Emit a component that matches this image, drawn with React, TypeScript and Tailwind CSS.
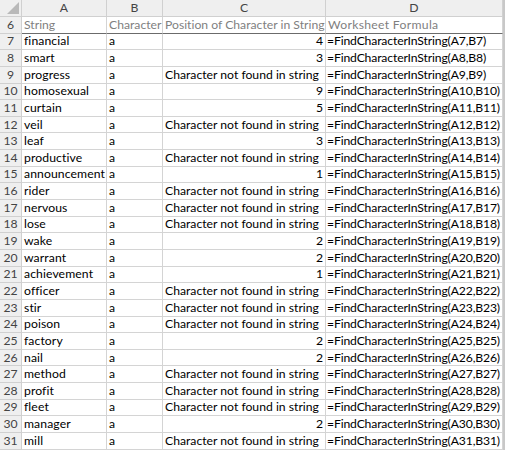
import React from "react";

type Row = [number, string, string];
const NF = "Character not found in string";
const rows: Row[] = [
  [7, "financial", "4"],
  [8, "smart", "3"],
  [9, "progress", NF],
  [10, "homosexual", "9"],
  [11, "curtain", "5"],
  [12, "veil", NF],
  [13, "leaf", "3"],
  [14, "productive", NF],
  [15, "announcement", "1"],
  [16, "rider", NF],
  [17, "nervous", NF],
  [18, "lose", NF],
  [19, "wake", "2"],
  [20, "warrant", "2"],
  [21, "achievement", "1"],
  [22, "officer", NF],
  [23, "stir", NF],
  [24, "poison", NF],
  [25, "factory", "2"],
  [26, "nail", "2"],
  [27, "method", NF],
  [28, "profit", NF],
  [29, "fleet", NF],
  [30, "manager", "2"],
  [31, "mill", NF],
];

const cols = "grid grid-cols-[22px_85px_56px_163px_177px_2px]";
const cell = "border-r border-b border-[#d4d4d4] px-[2px] flex items-center whitespace-nowrap";
const hdr = "bg-[#efefef] border-r border-b border-[#d0d0d0] flex items-center justify-center text-[#444]";

export default function App() {
  return (
    <div
      className="w-[505px] h-[450px] bg-white overflow-hidden text-[12.2px] text-black leading-none [font-variant-ligatures:none]"
      style={{ fontFamily: "Lato, 'Open Sans', sans-serif" }}
    >
      <div className={`${cols} h-[17px]`}>
        <div className="bg-[#efefef] border-r border-b border-[#d0d0d0] relative">
          <div className="absolute right-[2px] bottom-[2px] w-0 h-0 border-l-[12px] border-l-transparent border-b-[12px] border-b-[#b9b9b9]" />
        </div>
        <div className={hdr}>A</div>
        <div className={hdr}>B</div>
        <div className={hdr}>C</div>
        <div className={hdr}>D</div>
        <div className="bg-[#c8c8c8]" />
      </div>
      <div className={`${cols} h-[16.65px]`}>
        <div className={`${hdr} border-b-[#d0d0d0]`}>6</div>
        <div className={`${cell} text-[#7f7f7f] border-b-[#6b6b6b]`}>String</div>
        <div className={`${cell} text-[#7f7f7f] border-b-[#6b6b6b]`}>Character</div>
        <div className={`${cell} text-[#7f7f7f] border-b-[#6b6b6b]`}>Position of Character in String</div>
        <div className={`${cell} text-[#7f7f7f] border-b-[#6b6b6b] tracking-[0.3px]`}>Worksheet Formula</div>
        <div className="bg-[#c8c8c8]" />
      </div>
      {rows.map(([n, s, p]) => (
        <div key={n} className={`${cols} h-[16.65px]`}>
          <div className={hdr}>{n}</div>
          <div className={`${cell} tracking-[0.1px]`}>{s}</div>
          <div className={cell}>a</div>
          <div className={`${cell} ${p === NF ? "" : "justify-end"}`}>{p}</div>
          <div className={`${cell} pl-[1px] pr-0 tracking-[-0.15px] overflow-hidden`}>{`=FindCharacterInString(A${n},B${n})`}</div>
          <div className="bg-[#c8c8c8]" />
        </div>
      ))}
    </div>
  );
}
